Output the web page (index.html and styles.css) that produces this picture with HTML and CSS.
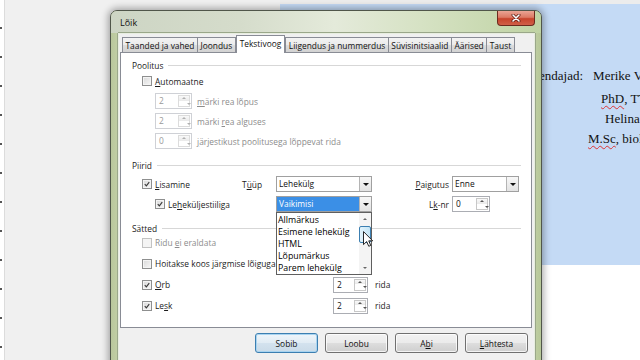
FILE: index.html
```html
<!DOCTYPE html>
<html lang="et">
<head>
<meta charset="utf-8">
<title>Lõik</title>
<link rel="stylesheet" href="styles.css">
</head>
<body>
<div class="screen">
  <div class="ruler"></div>
  <div class="pane"></div>
  <div class="page">
    <div class="page-top"></div>
    <div class="docsel">
      <div class="doc-row r1"><span class="dl">Juhendajad:</span><span class="dn">Merike V</span></div>
      <div class="doc-row r2"><span class="wavy">PhD</span>, TT</div>
      <div class="doc-row r3">Helina</div>
      <div class="doc-row r4"><span class="wavy">M.Sc</span>, biol</div>
    </div>
  </div>

  <div class="dialog">
    <div class="titlebar">
      <span class="title">Lõik</span>
      <div class="close"><svg width="10" height="8" viewBox="0 0 10 8"><path d="M2 1 L8 7 M8 1 L2 7" stroke="#5a1a10" stroke-width="3" stroke-linecap="round"/><path d="M2 1 L8 7 M8 1 L2 7" stroke="#fff" stroke-width="1.6" stroke-linecap="round"/></svg></div>
    </div>
    <div class="client">
      <div class="tabs">
        <div class="tab">Taanded ja vahed</div>
        <div class="tab">Joondus</div>
        <div class="tab active">Tekstivoog</div>
        <div class="tab">Liigendus ja nummerdus</div>
        <div class="tab">Süvisinitsiaalid</div>
        <div class="tab">Äärised</div>
        <div class="tab">Taust</div>
      </div>
      <div class="panel">
        <div class="group-h"><span>Poolitus</span></div>
        <div class="row ind1"><span class="cb"></span><span class="lbl"><u>A</u>utomaatne</span></div>
        <div class="row ind2 dis"><span class="spin w37 off"><span class="val">2</span><span class="sbtns"><i class="up"></i><i class="dn"></i></span></span><span class="lbl"><u>m</u>ärki rea lõpus</span></div>
        <div class="row ind2 dis"><span class="spin w37 off"><span class="val">2</span><span class="sbtns"><i class="up"></i><i class="dn"></i></span></span><span class="lbl">märki <u>r</u>ea alguses</span></div>
        <div class="row ind2 dis"><span class="spin w37 off"><span class="val">0</span><span class="sbtns"><i class="up"></i><i class="dn"></i></span></span><span class="lbl"><u>j</u>ärjestikust poolitusega lõppevat rida</span></div>

        <div class="group-h g2"><span>Piirid</span></div>
        <div class="pgrid">
          <div class="cell ind1"><span class="cb on"><svg viewBox="0 0 10 10"><path d="M2.2 5.2 L4.2 7.4 L7.8 2.6" fill="none" stroke="#3a3a3a" stroke-width="1.4"/></svg></span><span class="lbl"><u>L</u>isamine</span></div>
          <div class="cell">T<u>ü</u>üp</div>
          <div class="cell"><div class="combo"><span class="cval">Lehekülg</span><span class="cbtn"><i class="tri"></i></span></div></div>
          <div class="cell rt"><u>P</u>aigutus</div>
          <div class="cell"><div class="combo w67"><span class="cval">Enne</span><span class="cbtn"><i class="tri"></i></span></div></div>

          <div class="cell ind2"><span class="cb on"><svg viewBox="0 0 10 10"><path d="M2.2 5.2 L4.2 7.4 L7.8 2.6" fill="none" stroke="#3a3a3a" stroke-width="1.4"/></svg></span><span class="lbl">Le<u>h</u>eküljestiiliga</span></div>
          <div class="cell"></div>
          <div class="cell">
            <div class="combo open"><span class="cval picked">Vaikimisi</span><span class="cbtn"><i class="tri"></i></span>
              <div class="dlist">
                <div class="items">
                  <div class="it">Allmärkus</div>
                  <div class="it">Esimene lehekülg</div>
                  <div class="it">HTML</div>
                  <div class="it">Lõpumärkus</div>
                  <div class="it">Parem lehekülg</div>
                </div>
                <div class="sbar">
                  <span class="sb-a"><i class="tup"></i></span>
                  <span class="thumb"></span>
                  <span class="sb-t"></span>
                  <span class="sb-a"><i class="tdn"></i></span>
                </div>
                <svg class="cursor" width="10" height="16" viewBox="0 0 12 19"><path d="M0.6 0.6 V16.2 L4.4 12.6 L6.9 18.2 L9.3 17.2 L6.9 11.7 H11.6 Z" fill="#fff" stroke="#000" stroke-width="1"/></svg>
              </div>
            </div>
          </div>
          <div class="cell rt">L<u>k</u>-nr</div>
          <div class="cell"><span class="spin w38"><span class="val">0</span><span class="sbtns"><i class="up"></i><i class="dn"></i></span></span></div>
        </div>

        <div class="group-h g3"><span>Sätted</span></div>
        <div class="srow ind1 dis"><span class="cb off"></span><span class="lbl">Ridu <u>e</u>i eraldata</span></div>
        <div class="srow ind1"><span class="cb"></span><span class="lbl">Hoitakse koos jär<u>g</u>mise lõiguga</span></div>
        <div class="srow ind1 sgrid"><div class="sc"><span class="cb on"><svg viewBox="0 0 10 10"><path d="M2.2 5.2 L4.2 7.4 L7.8 2.6" fill="none" stroke="#3a3a3a" stroke-width="1.4"/></svg></span><span class="lbl"><u>O</u>rb</span></div><span class="spin w35"><span class="val">2</span><span class="sbtns"><i class="up"></i><i class="dn"></i></span></span><span class="rida">rida</span></div>
        <div class="srow ind1 sgrid"><div class="sc"><span class="cb on"><svg viewBox="0 0 10 10"><path d="M2.2 5.2 L4.2 7.4 L7.8 2.6" fill="none" stroke="#3a3a3a" stroke-width="1.4"/></svg></span><span class="lbl">Le<u>s</u>k</span></div><span class="spin w35"><span class="val">2</span><span class="sbtns"><i class="up"></i><i class="dn"></i></span></span><span class="rida">rida</span></div>
      </div>
      <div class="buttons">
        <div class="btn def">Sobib</div>
        <div class="btn">Loobu</div>
        <div class="btn">A<u>b</u>i</div>
        <div class="btn"><u>L</u>ähtesta</div>
      </div>
    </div>
  </div>
</div>
</body>
</html>
```

FILE: styles.css
```css
* { box-sizing: border-box; }
html, body { margin: 0; padding: 0; }
body {
  width: 640px; height: 360px; overflow: hidden;
  background: #f0f0f0;
  font-family: "Open Sans", "Noto Sans", sans-serif;
  font-size: 8.4px;
  color: #1b1b1b;
}
u { text-decoration-thickness: 1px; text-underline-offset: 1px; }

.screen { position: relative; width: 640px; height: 360px; display: flex; }
.ruler {
  width: 5px; background: #fff; border-right: 1px solid #dcdcdc;
  background-image: repeating-linear-gradient(180deg, transparent 0 27px, #555 27px 29px);
  background-size: 2px 100%; background-repeat: no-repeat;
}
.pane { width: 275px; background: #f0f0f0; }
.page { flex: 1; background: #fff; overflow: hidden; }
.page-top { height: 4px; background: #ececec; }
.docsel {
  height: 261px; background: #c4daf5;
  font-family: "Liberation Serif", "Times New Roman", serif; font-size: 13px; color: #111;
  padding-top: 62px; white-space: nowrap;
}
.doc-row { height: 20px; line-height: 20px; }
.r1 { padding-left: 241px; }
.dn { margin-left: 10px; }
.r2 { padding-left: 321px; margin-top: 3px; }
.r3 { padding-left: 325px; }
.r4 { padding-left: 308px; }
.wavy { text-decoration: underline wavy #d33; text-decoration-thickness: 1px; text-underline-offset: 2px; }

/* dialog window */
.dialog {
  position: absolute; left: 110px; top: 10px; width: 432px; height: 362px;
  border: 1px solid #50564a; border-radius: 7px 7px 0 0;
  background: linear-gradient(90deg, #b9c79c, #c8d5ad 3%, #c8d5ad 97%, #b6c798);
  box-shadow: 0 0 7px 2px rgba(0,0,0,0.32);
  padding: 0 6px 0 7px;
  display: flex; flex-direction: column;
}
.titlebar {
  height: 22px; margin: 0 -6px 0 -7px; padding: 0 9px 0 9px;
  border-radius: 6px 6px 0 0;
  background: linear-gradient(90deg, #cdd5c4 0%, #d5dccb 30%, #e4eada 52%, #d6e2c4 72%, #bfd3a3 100%);
  display: flex; align-items: center; justify-content: space-between;
}
.title { font-size: 9px; color: #111; }
.close {
  align-self: flex-start; width: 38px; height: 15px; margin-right: -3px;
  border: 1px solid #6d2a1e; border-top: none; border-radius: 0 0 4px 4px;
  background: linear-gradient(#eaa494 0%, #dc7a64 45%, #c7442b 55%, #d06048 100%);
  display: flex; align-items: center; justify-content: center;
}
.client {
  flex: 1; background: #f0f0f0;
  border: 1px solid #e8eee0; border-bottom: none;
  box-shadow: -1px 0 0 #9aa78a, 1px 0 0 #9aa78a, 0 -1px 0 #9aa78a;
}
.tabs { height: 18px; display: flex; align-items: flex-end; padding: 1px 0 0 3px; }
.tab {
  height: 15px; padding: 0 2.5px; margin-right: -1px;
  border: 1px solid #898c95; border-bottom: none;
  background: linear-gradient(#f3f3f3 0%, #ebebeb 50%, #dddddd 51%, #d2d2d2 100%);
  display: flex; align-items: center; white-space: nowrap; color: #111;
}
.tab.active {
  height: 18px; margin-bottom: -1px; position: relative; z-index: 1;
  background: #fff; padding: 0 3px 2px; margin-left: 1px; margin-right: 0;
}
.panel {
  height: 276px; margin-left: 1px; width: 412px;
  border: 1px solid #898c95; background: #fff;
  padding: 6px 10px 0 11px;
}
.group-h { height: 12px; display: flex; align-items: center; color: #1b1b1b; }
.group-h::after { content: ""; flex: 1; margin-left: 5px; border-top: 1px solid #d7d7d7; }
.g2 { margin-top: 8px; margin-bottom: 3px; }
.g3 { margin-top: 8px; margin-bottom: -2px; }

.row { height: 20px; display: flex; align-items: center; }
.ind1 { padding-left: 10px; }
.ind2 { padding-left: 23px; }
.dis { color: #8c8c8c; }
.lbl { margin-left: 3px; white-space: nowrap; }
.row.ind2 .lbl { margin-left: 5px; }

.cb {
  width: 10px; height: 10px; flex: none;
  border: 1px solid #8e8f8f;
  background: linear-gradient(135deg, #d9d9d9, #f7f7f7);
  box-shadow: inset 0 0 0 1px #f4f4f4;
  display: inline-flex;
}
.cb svg { width: 8px; height: 8px; }
.cb.off { border-color: #c2c2c2; background: #f4f4f4; }

.spin { height: 16px; display: flex; border: 1px solid #abadb3; background: #fff; flex: none; }
.spin.w37 { width: 37px; }
.spin.w38 { width: 38px; }
.spin.w35 { width: 35px; }
.spin .val { flex: 1; padding-left: 3px; line-height: 14px; color: #111; }
.spin.off { border-color: #cfd1d6; }
.spin.off .val { color: #9a9a9a; }
.sbtns { width: 12px; display: flex; flex-direction: column; border: 1px solid #c8c8c8; margin: 1px 1px 1px 0; }
.sbtns i { flex: 1; display: flex; align-items: center; justify-content: center; background: linear-gradient(#f9f9f9, #e9e9e9); }
.sbtns i + i { border-top: 1px solid #d6d6d6; }
.sbtns i::before { content: ""; width: 0; height: 0; border-left: 2.5px solid transparent; border-right: 2.5px solid transparent; }
.sbtns .up::before { border-bottom: 2.5px solid #555; }
.sbtns .dn::before { border-top: 2.5px solid #555; }
.spin.off .sbtns { border-color: #dcdcdc; }
.spin.off .sbtns .up::before { border-bottom-color: #b0b0b0; }
.spin.off .sbtns .dn::before { border-top-color: #b0b0b0; }

.pgrid { display: grid; grid-template-columns: 110px 34px 96px 80px 1fr; grid-auto-rows: 20px; }
.cell { display: flex; align-items: center; }
.cell.rt { justify-content: flex-end; padding-right: 3px; }

.combo { position: relative; width: 96px; height: 16px; display: flex; border: 1px solid #a0a0a0; background: #fff; }
.combo.w67 { width: 67px; }
.cval { flex: 1; padding-left: 2px; line-height: 14px; color: #111; white-space: nowrap; }
.cval.picked { background: #3b8fe6; color: #fff; }
.cbtn {
  width: 12px; border-left: 1px solid #b4b4b4;
  background: linear-gradient(#f8f8f8, #e3e3e3);
  display: flex; align-items: center; justify-content: center;
}
.tri { width: 0; height: 0; border-left: 3px solid transparent; border-right: 3px solid transparent; border-top: 3px solid #111; }

.dlist {
  position: absolute; left: -1px; top: 15px; width: 96px; height: 63px; z-index: 5;
  border: 1px solid #5f5f5f; background: #fff; display: flex;
  font-size: 8.8px; color: #000;
}
.items { flex: 1; padding-top: 1px; }
.it { height: 12px; line-height: 12px; padding-left: 1px; white-space: nowrap; }
.sbar { width: 12px; display: flex; flex-direction: column; background: #f4f4f4; }
.sb-a { height: 12px; display: flex; align-items: center; justify-content: center; }
.tup { width: 0; height: 0; border-left: 2px solid transparent; border-right: 2px solid transparent; border-bottom: 2px solid #666; }
.tdn { width: 0; height: 0; border-left: 2px solid transparent; border-right: 2px solid transparent; border-top: 2px solid #666; }
.thumb {
  height: 17px; margin: 1px 0; border: 1px solid #3c7fb1; border-radius: 2px;
  background: linear-gradient(90deg, #e3f4fc, #c4e5f6);
}
.sb-t { flex: 1; }
.cursor { position: absolute; left: 86px; top: 18px; }

.srow { height: 21px; display: flex; align-items: center; }
.sgrid { display: grid; grid-template-columns: 191px 35px auto; align-items: center; }
.sc { display: flex; align-items: center; }
.rida { margin-left: 7px; }

.buttons { display: flex; justify-content: flex-end; gap: 7px; padding: 5px 6px 0 0; }
.btn {
  width: 63px; height: 20px; border: 1px solid #707070; border-radius: 3px;
  background: linear-gradient(#f2f2f2 0%, #ebebeb 48%, #dddddd 52%, #cfcfcf 100%);
  box-shadow: inset 0 0 0 1px rgba(255,255,255,0.75);
  display: flex; align-items: center; justify-content: center; color: #111;
}
.btn.def {
  border-color: #3c7fb1;
  background: linear-gradient(#eef5fa 0%, #e1ecf4 48%, #d3e2ee 52%, #cadbe8 100%);
  box-shadow: inset 0 0 0 1px #a9d4f0;
}
```
